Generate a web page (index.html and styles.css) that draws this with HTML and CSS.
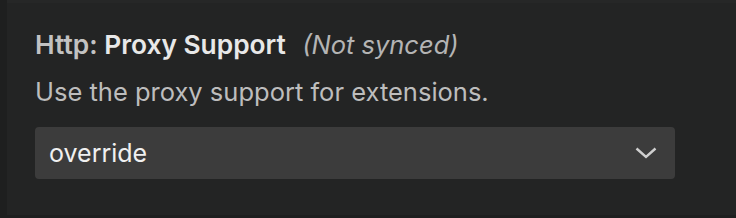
FILE: index.html
```html
<!DOCTYPE html>
<html lang="en">
<head>
  <meta charset="UTF-8" />
  <title>Settings</title>
  <link rel="stylesheet" href="styles.css">
</head>
<body>
  <div class="frame">
    <div class="setting">
      <div class="title">
        <span class="category">Http: </span><span class="label">Proxy Support</span>
        <span class="sync">(Not synced)</span>
      </div>
      <div class="description">Use the proxy support for extensions.</div>
      <div class="select">
        <span class="value">override</span>
        <svg class="chevron" width="22" height="12" viewBox="0 0 22 12">
          <path d="M1.5 1.5 L11 10 L20.5 1.5" fill="none" stroke="#cfcfcf" stroke-width="2.4" />
        </svg>
      </div>
    </div>
  </div>
</body>
</html>
```

FILE: styles.css
```css
html, body {
  margin: 0;
  height: 100%;
}
body {
  background: #1e1f1f;
  font-family: 'Inter', 'Noto Sans', sans-serif;
}
.frame {
  margin-left: 7px;
  height: 215px;
  background: #232424;
  border-top: 3px solid #262727;
  box-sizing: border-box;
}
.setting {
  padding: 27px 0 0 28px;
  width: 640px;
}
.title {
  font-size: 26.3px;
  color: #c2c2c2;
  line-height: 30px;
  white-space: nowrap;
}
.title .category {
  font-weight: 600;
}
.title .label {
  font-weight: 600;
  color: #e8e8e8;
}
.title .sync {
  font-style: italic;
  color: #b4b4b4;
  margin-left: 9px;
  font-size: 25.5px;
}
.description {
  margin-top: 17px;
  font-size: 25.5px;
  line-height: 30px;
  color: #bdbdbd;
}
.select {
  margin-top: 20px;
  height: 52px;
  background: #3c3c3c;
  border-radius: 4px;
  display: flex;
  align-items: center;
  justify-content: space-between;
  padding: 0 18px 0 14px;
}
.select .value {
  font-size: 25px;
  color: #f0f0f0;
}
```
